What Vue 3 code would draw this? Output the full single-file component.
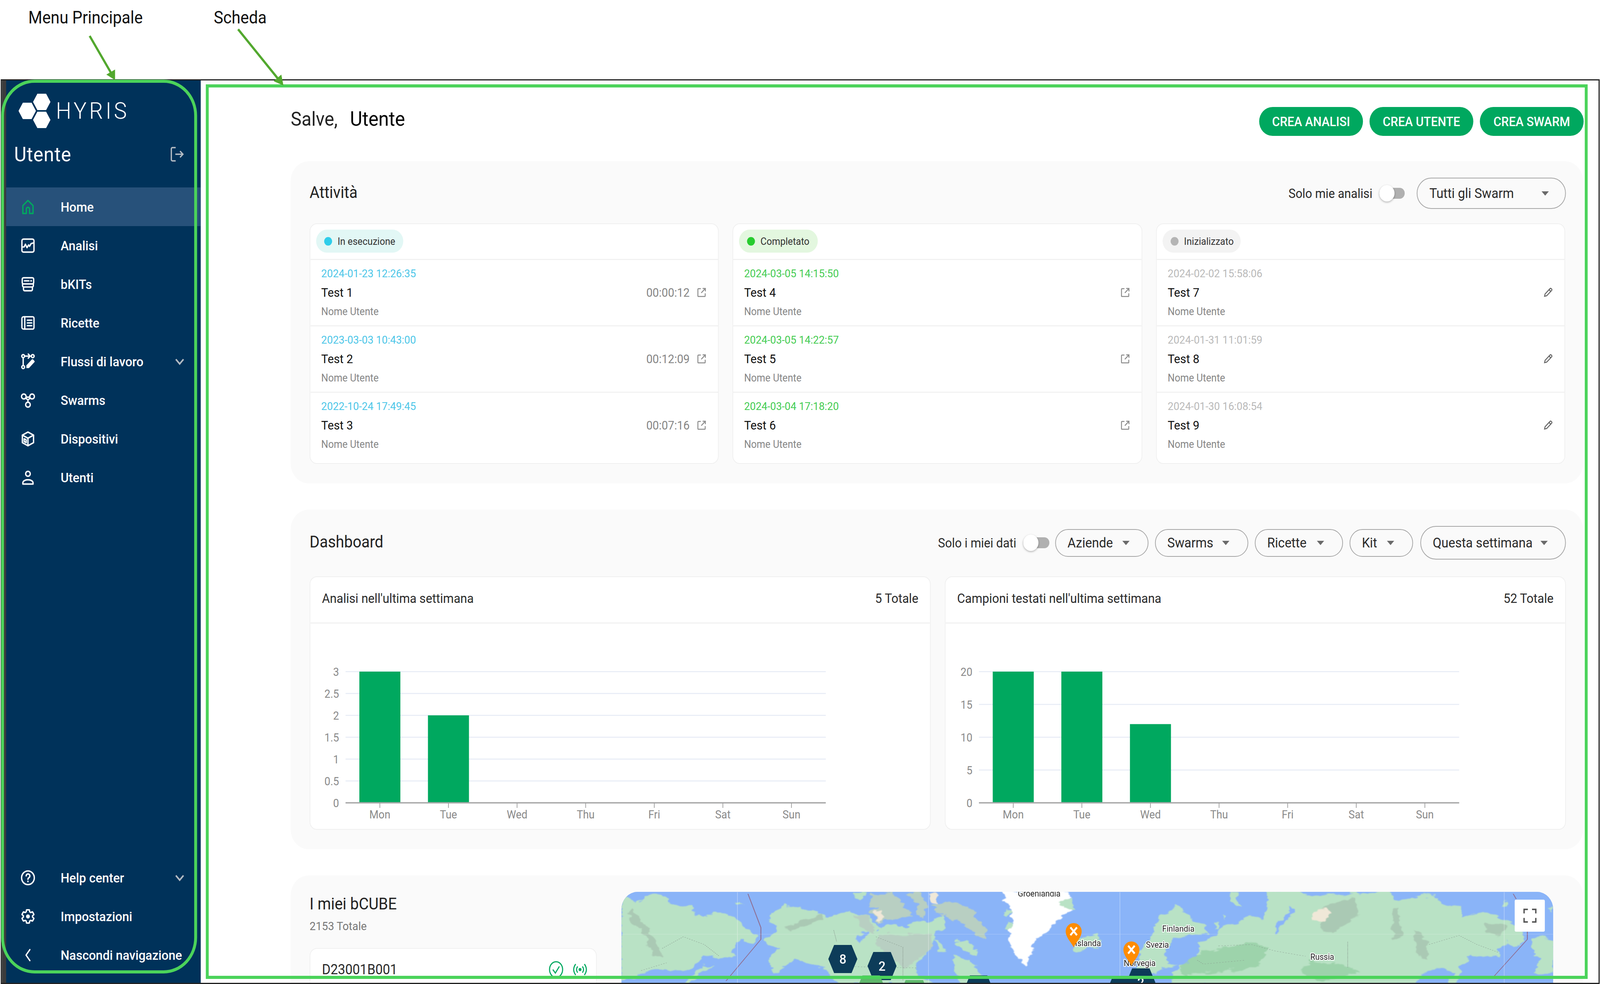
<template>
  <div class="stage">
    <div class="page" :style="{ transform: `scaleX(${fitX})` }">
      <div class="captions">
        <span class="caption cap-menu">Menu Principale</span>
        <span class="caption cap-tab">Scheda</span>
      </div>

      <div class="shell">
        <aside class="sidebar">
          <div class="logo">
            <svg class="logo-mark" viewBox="0 0 90 92">
              <path d="M52 2h24l12 21-12 21H52L40 23z" />
              <path d="M12 25h24l12 21-12 21H12L0 46z" />
              <path d="M52 48h24l12 21-12 21H52L40 69z" />
            </svg>
            <span class="logo-text">HYRIS</span>
          </div>
          <div class="user-row">
            <span class="user-name">Utente</span>
            <svg class="logout" viewBox="0 0 38 40">
              <path d="M15 3H6a3 3 0 0 0-3 3v28a3 3 0 0 0 3 3h9" />
              <path d="M14 20h21M27 12l8 8-8 8" />
            </svg>
          </div>

          <nav class="nav">
            <div v-for="item in navItems" :key="item.label" class="nav-item" :class="{ active: item.active }">
              <svg class="nav-icon" viewBox="0 0 24 24">
                <path v-for="d in item.icon" :key="d" :d="d" />
                <path v-for="d in item.solid || []" :key="d" :d="d" class="solid" />
              </svg>
              <span class="nav-label">{{ item.label }}</span>
              <svg v-if="item.more" class="chev" viewBox="0 0 24 24"><path d="M3 7l9 10 9-10" /></svg>
            </div>
          </nav>

          <div class="nav nav-bottom">
            <div v-for="item in bottomItems" :key="item.label" class="nav-item">
              <svg class="nav-icon" viewBox="0 0 24 24">
                <path v-for="d in item.icon" :key="d" :d="d" />
                <path v-for="d in item.solid || []" :key="d" :d="d" class="solid" />
              </svg>
              <span class="nav-label">{{ item.label }}</span>
              <svg v-if="item.more" class="chev" viewBox="0 0 24 24"><path d="M3 7l9 10 9-10" /></svg>
            </div>
          </div>
        </aside>

        <main class="main">
          <header class="top">
            <div class="hello"><span class="hello-a">Salve,</span><span class="hello-b">Utente</span></div>
            <div class="actions">
              <button class="cta">CREA ANALISI</button>
              <button class="cta">CREA UTENTE</button>
              <button class="cta">CREA SWARM</button>
            </div>
          </header>

          <section class="panel panel-activity">
            <div class="panel-head">
              <h2 class="panel-title">Attività</h2>
              <div class="filters">
                <span class="toggle-label">Solo mie analisi</span>
                <span class="toggle"><i></i></span>
                <span class="select select-wide">Tutti gli Swarm<b class="caret"></b></span>
              </div>
            </div>
            <div class="columns">
              <div v-for="col in columns" :key="col.status" class="col">
                <div class="col-head">
                  <span class="pill" :class="col.kind"><i class="dot"></i>{{ col.status }}</span>
                </div>
                <div v-for="row in col.rows" :key="row.name" class="row" :class="col.kind">
                  <div class="row-text">
                    <div class="row-date">{{ row.date }}</div>
                    <div class="row-name">{{ row.name }}</div>
                    <div class="row-user">Nome Utente</div>
                  </div>
                  <div class="row-side">
                    <span v-if="row.time" class="row-time">{{ row.time }}</span>
                    <svg v-if="col.kind !== 'idle'" class="mini" viewBox="0 0 24 24">
                      <path d="M10 3H4a1.5 1.5 0 0 0-1.5 1.5v15.5A1.5 1.5 0 0 0 4 21.500h15.500A1.500 1.500 0 0 0 21 20v-6" />
                      <path d="M14.500 2.500h7v7M21 3l-10 10" />
                    </svg>
                    <svg v-else class="mini pen" viewBox="0 0 24 24">
                      <path d="M3 21l1.300-5.500L16.800 3a2.300 2.300 0 0 1 3.200 0l1 1a2.300 2.300 0 0 1 0 3.200L8.500 19.700z" />
                      <path d="M14.500 5.500l4 4" />
                    </svg>
                  </div>
                </div>
              </div>
            </div>
          </section>

          <section class="panel panel-dash">
            <div class="panel-head dash-head">
              <h2 class="panel-title">Dashboard</h2>
              <div class="filters filters-dash">
                <span class="toggle-label">Solo i miei dati</span>
                <span class="toggle"><i></i></span>
                <span v-for="chip in chips" :key="chip.label" class="select chip" :class="chip.size">{{ chip.label }}<b class="caret"></b></span>
                <span class="select chip chip-tall">Questa settimana<b class="caret"></b></span>
              </div>
            </div>
            <div class="charts">
              <div v-for="chart in charts" :key="chart.title" class="chart-card">
                <div class="chart-head">
                  <span>{{ chart.title }}</span>
                  <span>{{ chart.total }}</span>
                </div>
                <svg class="chart" :viewBox="`0 0 ${chartWidth} 530`">
                  <line v-for="t in chart.ticks" :key="t" class="grid" :x1="chart.x0" :x2="chart.x0 + 1323" :y1="yOf(chart, t)" :y2="yOf(chart, t)" />
                  <text v-for="t in chart.ticks" :key="'l' + t" class="tick-label" :x="chart.x0 - 18" :y="yOf(chart, t) + 11" text-anchor="end">{{ t }}</text>
                  <rect v-for="(v, i) in chart.values" :key="i" class="bar" :x="chart.x0 + 38 + i * 189" :y="yOf(chart, v)" width="113" :height="base - yOf(chart, v)" />
                  <line class="axis" :x1="chart.x0" :x2="chart.x0 + 1323" :y1="base" :y2="base" />
                  <g v-for="(d, i) in days" :key="d">
                    <line class="axis-tick" :x1="chart.x0 + 94.500 + i * 189" :x2="chart.x0 + 94.500 + i * 189" :y1="base" :y2="base + 13" />
                    <text class="tick-label" :x="chart.x0 + 94.500 + i * 189" :y="base + 40" text-anchor="middle">{{ d }}</text>
                  </g>
                </svg>
              </div>
            </div>
          </section>

          <section class="panel panel-map">
            <div class="device-side">
              <h2 class="panel-title">I miei bCUBE</h2>
              <div class="device-total">2153 Totale</div>
              <div class="device-card">
                <span class="device-id">D23001B001</span>
                <svg class="dev-icon" viewBox="0 0 40 44">
                  <ellipse cx="20" cy="22" rx="18" ry="20" />
                  <path d="M11 22l7 9 11-17" />
                </svg>
                <svg class="dev-icon signal" viewBox="0 0 40 44">
                  <path d="M8 8c-7 9-7 19 0 28M32 8c7 9 7 19 0 28M13.500 14c-4 5-4 11 0 16M26.500 14c4 5 4 11 0 16" />
                  <circle cx="20" cy="22" r="4" />
                </svg>
              </div>
            </div>

            <div class="map">
              <svg class="map-svg" viewBox="0 0 2567 240">
                <defs>
                  <filter id="coast" x="-2%" y="-10%" width="104%" height="120%">
                    <feTurbulence type="fractalNoise" baseFrequency=".025 .07" numOctaves="3" seed="4" />
                    <feDisplacementMap in="SourceGraphic" scale="24" xChannelSelector="R" yChannelSelector="G" />
                    <feGaussianBlur stdDeviation="1.200" />
                  </filter>
                </defs>
                <rect width="2567" height="240" fill="#8ab4f8" />
                <g filter="url(#coast)">
                  <g transform="translate(-12,-5) scale(.829,.3333)">
                    <path class="land" d="M14 60L30 50 60 100 110 40 125 25 150 40 180 60 175 100 205 130 245 115 258 150 255 210 270 195 310 190 335 175 380 195 410 250 440 310 470 350 460 400 445 430 420 390 395 410 385 470 390 510 350 520 290 500 280 540 250 590 215 630 160 610 100 620 50 680 14 700Z" />
                    <path class="land" d="M285 585L325 575 270 660 240 730 220 730Z" />
                    <path class="land" d="M390 105L410 90 418 115 395 130Z" />
                    <path class="land" d="M500 240L520 190 560 110 590 130 650 170 710 210 740 180 770 155 800 190 825 195 860 240 870 300 900 280 930 270 970 270 1000 230 1030 250 1060 200 1090 200 1095 280 1060 340 1060 400 1030 480 1010 540 990 590 990 640 1040 700 1050 730 740 730 700 620 640 565 590 530 540 620 520 630 500 570 510 500 540 450 500 420 490 380 520 340 530 290Z" />
                    <path class="tundra" d="M870 340L1050 340 1050 430 1010 520 960 600 900 500 860 420Z" />
                    <path class="tundra" d="M790 200L830 200 860 300 850 340 810 290Z" />
                    <path class="water" d="M795 345L840 325 810 410 800 380Z" />
                    <path class="land" d="M790 20L830 20 810 90 790 60Z" />
                    <path class="tundra" d="M840 20L920 20 950 110 980 200 930 225 870 240 840 160 870 120 840 120Z" />
                    <path class="tundra" d="M960 20L1000 20 1030 100 1020 230 990 200 1000 110Z" />
                    <path class="tundra" d="M1040 120L1120 90 1160 110 1190 200 1230 320 1220 390 1190 350 1170 300 1140 250 1070 180Z" />
                    <path class="land" d="M1120 400L1160 380 1200 480 1200 520 1170 480 1130 430Z" />
                    <path class="land" d="M1060 390L1100 460 1070 470Z" />
                    <path class="land" d="M1120 510L1170 550 1190 600 1210 650 1240 730 1150 730 1120 620Z" />
                    <path class="land" d="M1295 140L1310 160 1300 205 1285 175Z" />
                    <path class="land" d="M1295 250L1320 270 1310 330 1295 300Z" />
                    <path class="ice" d="M1285 10L1500 10 1510 60 1480 100 1510 160 1470 220 1440 300 1400 370 1370 510 1360 595 1330 530 1310 430 1300 340 1320 250 1300 100 1285 70Z" />
                    <path class="land" d="M1470 90L1510 70 1520 150 1490 150Z" />
                    <path class="land" d="M1505 400L1540 370 1600 345 1610 430 1530 465Z" />
                    <path class="sand" d="M1040 17L1060 17 1065 110 1045 100Z" />
                    <path class="sand" d="M850 160L880 170 880 240 860 210Z" />
                    <path class="smudge" d="M560 290L680 190 690 220 580 310Z" />
                    <path class="smudge" d="M30 200L50 150 130 380 150 520 120 500 90 350Z" />
                  </g>
                  <g transform="translate(1288,-5) scale(.829,.3333)">
                    <path class="land" d="M590 10L680 10 760 50 1000 10 1030 90 1090 60 1100 30 1160 60 1190 130 1230 120 1240 180 1240 210 1270 190 1310 175 1360 200 1420 270 1450 350 1440 410 1420 440 1395 400 1370 420 1360 470 1370 510 1310 510 1270 500 1250 550 1210 630 1140 610 1090 680 1080 730 270 730 280 650 300 600 340 560 380 520 360 480 370 400 420 350 440 290 500 240 540 190 580 230 590 100Z" />
                    <path class="land" d="M210 340L240 190 290 130 320 170 340 220 380 260 395 340 360 360 320 350 280 370 255 470 260 560 300 590 240 590 225 660 170 640 160 570 180 440Z" />
                    <path class="land" d="M470 20L500 17 490 60 510 130 490 140 470 80Z" />
                    <path class="land" d="M420 260L435 250 430 310 420 300Z" />
                    <path class="land" d="M445 200L458 205 452 235Z" />
                    <path class="land" d="M1470 380L1510 350 1545 400 1545 640 1480 630 1500 530 1470 470Z" />
                    <path class="land" d="M1520 140L1545 125 1545 170Z" />
                    <path class="land" d="M1375 95L1395 95 1390 125 1370 125Z" />
                    <path class="land" d="M1262 505L1230 620 1220 730 1185 730 1210 640 1225 520Z" />
                    <path class="deep" d="M370 480L540 400 600 440 560 600 440 620 320 660 300 610Z" />
                    <path class="deep" d="M740 540L840 580 900 640 760 700 700 620Z" />
                    <path class="smudge" d="M1010 150L1030 150 1040 360 1010 380Z" />
                    <path class="smudge" d="M780 130L880 60 900 180 810 330 770 290Z" />
                    <path class="smudge" d="M1080 300L1130 390 1120 540 1090 500Z" />
                    <path class="smudge" d="M1310 250L1390 270 1370 350 1320 330Z" />
                    <path class="sand" d="M745 160L790 150 800 200 770 260 745 240Z" />
                    <path class="water" d="M625 230L655 225 640 300 620 330Z" />
                    <path class="water" d="M645 230L660 230 690 150 670 130Z" />
                  </g>
                </g>
                <g transform="translate(-12,-5) scale(.829,.3333)">
                  <path class="borderline" d="M150 450L220 360 290 420 340 510M80 620L165 560" />
                  <path class="borderline" d="M720 310L730 400M860 360L950 440 950 700M790 590L1000 600" />
                  <path class="dateline" d="M435 30L478 290 478 380 362 700" />
                  <path class="graticule" d="M400 17V720M1035 17V720M14 340H1568" />
                </g>
                <g transform="translate(1288,-5) scale(.829,.3333)">
                  <path class="borderline" d="M430 430L540 420 620 470 720 510M360 540L380 570 520 540M860 400V600M1130 420L1230 350 1290 420 1360 480" />
                  <path class="dateline" d="M1410 30L1420 70M1457 320V380L1340 680" />
                  <path class="graticule" d="M103 17V720M1380 17V720M0 340H1545" />
                </g>

                <text v-for="p in mapLabels" :key="p.t" class="map-label" :x="p.x" :y="p.y">{{ p.t }}</text>

                <g v-for="(m, i) in hexes" :key="i" :transform="`translate(${m.x},${m.y})`">
                  <path :class="m.green ? 'hex-green' : 'hex'" d="M-24-36H24L40 0 24 36H-24L-40 0Z" />
                  <text class="hex-text" y="12" text-anchor="middle">{{ m.n }}</text>
                </g>

                <g v-for="(p, i) in pins" :key="'p' + i" :transform="`translate(${p.x},${p.y})`">
                  <path class="pin" d="M0 62C-8 48-22 36-22 21A22 21 0 0 1 22 21C22 36 8 48 0 62Z" />
                  <path class="pin-x" d="M-9 11L9 31M9 11L-9 31" />
                </g>
              </svg>
              <div class="fullscreen">
                <svg viewBox="0 0 40 40"><path d="M3 14V3h11M26 3h11v11M37 26v11H26M14 37H3V26" /></svg>
              </div>
            </div>
          </section>
        </main>
      </div>

      <!-- annotazioni verdi sopra lo screenshot -->
      <div class="mark mark-nav"></div>
      <div class="mark mark-tab"></div>
      <svg class="arrows" viewBox="0 0 4408 2520">
        <line x1="247" y1="92" x2="308" y2="190" />
        <path d="M317 205L293 191 317 178Z" />
        <line x1="656" y1="75" x2="768" y2="204" />
        <path d="M781 219L754 208 775 191Z" />
      </svg>
    </div>
  </div>
</template>

<script setup>
// the window can come out narrower than the 4408 design, squeeze so nothing is cut
const fitX = Math.min(1, window.innerWidth / 4408)

const circle = (x, y, r) => `M${x - r} ${y}a${r} ${r} 0 1 0 ${r * 2} 0a${r} ${r} 0 1 0 ${-r * 2} 0`

const navItems = [
  { label: 'Home', active: true, icon: ['M12 2.500L4 10v11.500h5.500V15a2.500 2.500 0 0 1 5 0v6.500H20V10z'] },
  { label: 'Analisi', icon: ['M5 2.500h14A2.500 2.500 0 0 1 21.500 5v14a2.500 2.500 0 0 1-2.500 2.500H5A2.500 2.500 0 0 1 2.500 19V5A2.500 2.500 0 0 1 5 2.500z', 'M3 14h3l2-4 2.500 5 2.500-4 1.500 2 2.500-4 4-1'] },
  { label: 'bKITs', icon: ['M5 2.500h14a2 2 0 0 1 2 2v5a2 2 0 0 1-2 2H5a2 2 0 0 1-2-2v-5a2 2 0 0 1 2-2z', 'M6.500 7h7M16.500 7h1', 'M3.500 11.500V14a2 2 0 0 0 2 2h13a2 2 0 0 0 2-2v-2.500', 'M5 16v3.500a2 2 0 0 0 2 2h10a2 2 0 0 0 2-2V16'] },
  { label: 'Ricette', icon: ['M5 3h14.500A2 2 0 0 1 21.500 5v14a2 2 0 0 1-2 2H5a2.500 2.500 0 0 1-2.500-2.500v-13A2.500 2.500 0 0 1 5 3z', 'M7 3v18', 'M11 8h7M11 12h7M11 16h7'] },
  { label: 'Flussi di lavoro', more: true, icon: [circle(4.5, 4, 2.2), circle(19.5, 4, 2.2), circle(4.5, 20, 2.2), 'M4.500 6.200v11.600', 'M7 4h8M12.500 1l3 3-3 3'], solid: ['M9.500 21.500v-4l8.500-8.500a1.500 1.500 0 0 1 2.200 0l1.800 1.800a1.500 1.500 0 0 1 0 2.200l-8.500 8.500z'] },
  { label: 'Swarms', icon: [circle(5.5, 6.5, 3.6), circle(18.5, 6.5, 3.6), circle(12, 18.5, 3.6), 'M9 7.500h6M8.500 9l3.500 2.500L15.500 9M12 11.500v3.400'] },
  { label: 'Dispositivi', icon: ['M12 2l8.800 4.500v11L12 22l-8.800-4.500v-11z', 'M3.200 6.500L12 11l8.800-4.500M12 11v11', 'M6 11.800l3.200 1.600v4l-3.200-1.600z'] },
  { label: 'Utenti', icon: [circle(12, 6.5, 3.6), 'M4 21.500v-1.500c0-3 3.500-4.800 8-4.800s8 1.800 8 4.800v1.500z'] }
]

const bottomItems = [
  { label: 'Help center', more: true, icon: [circle(12, 12, 10), 'M9.200 9.300a2.900 2.900 0 1 1 4.400 2.500c-1 .6-1.600 1.200-1.600 2.400', 'M12 17v.6'] },
  { label: 'Impostazioni', icon: ['M19.140 12.940c.04-.3.060-.61.060-.94 0-.32-.02-.64-.07-.94l2.030-1.580c.18-.14.23-.41.120-.61l-1.920-3.320c-.12-.22-.37-.29-.59-.22l-2.390.96c-.5-.38-1.030-.7-1.620-.94l-.36-2.540c-.04-.24-.24-.41-.48-.41h-3.840c-.24 0-.43.17-.47.41l-.36 2.540c-.59.24-1.130.57-1.620.94l-2.390-.96c-.22-.08-.47 0-.59.22L2.740 8.870c-.12.21-.08.47.12.61l2.030 1.580c-.05.3-.09.63-.09.94s.02.64.07.94l-2.030 1.580c-.18.14-.23.41-.12.61l1.920 3.320c.12.22.37.29.59.22l2.390-.96c.5.38 1.030.7 1.620.94l.36 2.540c.05.24.24.41.48.41h3.840c.24 0 .44-.17.47-.41l.36-2.540c.59-.24 1.130-.56 1.620-.94l2.390.96c.22.08.47 0 .59-.22l1.920-3.320c.12-.22.07-.47-.12-.61l-2.010-1.580z'], solid: [circle(12, 12, 3)] },
  { label: 'Nascondi navigazione', icon: ['M15 4l-6 8 6 8'] }
]

const columns = [
  {
    status: 'In esecuzione',
    kind: 'running',
    rows: [
      { date: '2024-01-23 12:26:35', name: 'Test 1', time: '00:00:12' },
      { date: '2023-03-03 10:43:00', name: 'Test 2', time: '00:12:09' },
      { date: '2022-10-24 17:49:45', name: 'Test 3', time: '00:07:16' }
    ]
  },
  {
    status: 'Completato',
    kind: 'done',
    rows: [
      { date: '2024-03-05 14:15:50', name: 'Test 4' },
      { date: '2024-03-05 14:22:57', name: 'Test 5' },
      { date: '2024-03-04 17:18:20', name: 'Test 6' }
    ]
  },
  {
    status: 'Inizializzato',
    kind: 'idle',
    rows: [
      { date: '2024-02-02 15:58:06', name: 'Test 7' },
      { date: '2024-01-31 11:01:59', name: 'Test 8' },
      { date: '2024-01-30 16:08:54', name: 'Test 9' }
    ]
  }
]

const chips = [
  { label: 'Aziende', size: 'chip-m' },
  { label: 'Swarms', size: 'chip-m' },
  { label: 'Ricette', size: 'chip-s' },
  { label: 'Kit', size: 'chip-xs' }
]
const days = ['Mon', 'Tue', 'Wed', 'Thu', 'Fri', 'Sat', 'Sun']

const chartWidth = 1710
const base = 459
const charts = [
  { title: "Analisi nell'ultima settimana", total: '5 Totale', x0: 97, unit: 112, ticks: [0, 0.5, 1, 1.5, 2, 2.5, 3], values: [3, 2] },
  { title: "Campioni testati nell'ultima settimana", total: '52 Totale', x0: 92, unit: 16.8, ticks: [0, 5, 10, 15, 20], values: [20, 20, 12] }
]
const yOf = (chart, v) => base - v * chart.unit

const mapLabels = [
  { t: 'Groenlandia', x: 1092, y: 12 },
  { t: 'Islanda', x: 1250, y: 139 },
  { t: 'Svezia', x: 1445, y: 143 },
  { t: 'Finlandia', x: 1490, y: 102 },
  { t: 'Russia', x: 1898, y: 174 },
  { t: 'Norvegia', x: 1384, y: 190 }
]

const hexes = [
  { x: 610, y: 172, n: '8' },
  { x: 718, y: 190, n: '2' },
  { x: 688, y: 250, n: '53', green: true },
  { x: 807, y: 262, n: '5', green: true },
  { x: 984, y: 250, n: '8' },
  { x: 1377, y: 254, n: '2' },
  { x: 1431, y: 232, n: '2' }
]

const pins = [
  { x: 1246, y: 80 },
  { x: 1405, y: 127 }
]
</script>

<style>
html,
body {
  margin: 0;
  background: #fff;
}
</style>

<style scoped>
.stage {
  width: 100vw;
  height: 100vh;
  overflow: hidden;
}

.page {
  position: relative;
  width: 4408px;
  height: 2520px;
  overflow: hidden;
  transform-origin: 0 0;
  background: #fff;
  font-family: Roboto, "Liberation Sans", sans-serif;
  color: #222;
}

.captions {
  height: 203px;
}

.caption {
  position: absolute;
  top: 19px;
  font-size: 44px;
  color: #111;
}

.cap-menu {
  left: 78px;
}

.cap-tab {
  left: 589px;
}

.shell {
  display: flex;
  box-sizing: border-box;
  width: 4405px;
  height: 2317px;
  margin-left: 2px;
  border: 3px solid #222;
  background: #fff;
  overflow: hidden;
}

.sidebar {
  display: flex;
  flex-direction: column;
  flex: none;
  box-sizing: border-box;
  width: 548px;
  border-left: 12px solid #3c3c3c;
  background: #00325a;
  color: #fff;
}

.logo {
  display: flex;
  align-items: center;
  gap: 13px;
  padding: 32px 0 0 34px;
  height: 92px;
}

.logo-mark {
  width: 90px;
  height: 92px;
  fill: #fff;
}

.logo-text {
  font-size: 60px;
  font-weight: 300;
  letter-spacing: 7px;
  line-height: 60px;
}

.user-row {
  display: flex;
  align-items: center;
  justify-content: space-between;
  padding: 30px 46px 0 22px;
  height: 70px;
}

.user-name {
  font-size: 52px;
  letter-spacing: 1px;
}

.logout {
  width: 38px;
  height: 40px;
  fill: none;
  stroke: #b4bcc4;
  stroke-width: 3.500;
}

.nav {
  margin-top: 50px;
}

.nav-bottom {
  margin-top: auto;
  padding-bottom: 22px;
}

.nav-item {
  display: flex;
  align-items: center;
  height: 99px;
  padding-left: 39px;
  font-size: 34px;
  font-weight: 500;
}

.nav-item.active {
  background: #27517a;
}

.nav-item.active .nav-icon {
  stroke: #00a85f;
}

.nav-icon {
  flex: none;
  width: 42px;
  height: 42px;
  fill: none;
  stroke: #fff;
  stroke-width: 2.100;
  stroke-linejoin: round;
  stroke-linecap: round;
}

.solid {
  fill: #fff;
  stroke: none;
}

.nav-label {
  margin-left: 69px;
  white-space: nowrap;
}

.chev {
  width: 28px;
  height: 28px;
  margin-left: auto;
  margin-right: 44px;
  fill: none;
  stroke: #b4bcc4;
  stroke-width: 3.500;
}

.main {
  flex: 1;
  min-width: 0;
  padding: 68px 43px 0 248px;
  overflow: hidden;
}

.top {
  display: flex;
  align-items: flex-start;
  justify-content: space-between;
  height: 139px;
  margin-right: -2px;
}

.hello {
  display: flex;
  align-items: baseline;
  gap: 34px;
  font-size: 50px;
  line-height: 62px;
}

.hello-b {
  font-size: 52px;
  color: #000;
}

.actions {
  display: flex;
  gap: 18px;
}

.cta {
  height: 74px;
  width: 286px;
  border: 0;
  border-radius: 37px;
  background: #00a85f;
  color: #fff;
  font-family: inherit;
  font-size: 33px;
  font-weight: 500;
}

.panel {
  box-sizing: border-box;
  background: #fafafa;
  border-radius: 50px;
  padding: 42px 47px 50px 52px;
  margin-bottom: 67px;
}

.panel-head {
  display: flex;
  align-items: center;
  justify-content: space-between;
  height: 80px;
  margin-bottom: 37px;
}

.panel-title {
  margin: 0 0 6px;
  font-size: 42px;
  font-weight: 400;
  color: #222;
}

.filters {
  display: flex;
  align-items: center;
}

.toggle-label {
  font-size: 33px;
  color: #2a2a2a;
}

.toggle {
  position: relative;
  width: 70px;
  height: 28px;
  margin: 0 33px 0 19px;
  border-radius: 14px;
  background: #b0b0b0;
}

.toggle i {
  position: absolute;
  left: 0;
  top: -7px;
  width: 42px;
  height: 42px;
  border-radius: 50%;
  background: #fff;
  box-shadow: 0 2px 5px rgba(0, 0, 0, .3);
}

.select {
  display: flex;
  align-items: center;
  justify-content: space-between;
  box-sizing: border-box;
  border: 2px solid #a6a6a6;
  border-radius: 40px;
  font-size: 35px;
  color: #2a2a2a;
  white-space: nowrap;
}

.select-wide {
  width: 411px;
  height: 80px;
  padding: 0 45px 0 33px;
}

.caret {
  width: 0;
  height: 0;
  border: 10px solid transparent;
  border-top: 11px solid #6a6a6a;
  border-bottom: 0;
}

.columns {
  display: grid;
  grid-template-columns: 1127px 1129px 1127px;
  gap: 38px;
}

.col {
  box-sizing: border-box;
  height: 616px;
  border: 2px solid #f0f0f0;
  border-radius: 20px;
  background: #fff;
  overflow: hidden;
}

.col-head {
  height: 89px;
  padding: 14px 0 0 16px;
  box-sizing: border-box;
}

.pill {
  display: inline-flex;
  align-items: center;
  gap: 15px;
  box-sizing: border-box;
  height: 59px;
  padding: 0 22px;
  border-radius: 30px;
  font-size: 26px;
  color: #333;
  white-space: nowrap;
}

.pill .dot {
  flex: none;
  width: 22px;
  height: 22px;
  border-radius: 50%;
}

.pill.running {
  width: 240px;
  background: #e2f7f5;
}

.pill.running .dot {
  background: #2fcdea;
}

.pill.done {
  width: 217px;
  background: #e3f7df;
}

.pill.done .dot {
  background: #27cc2f;
}

.pill.idle {
  width: 215px;
  background: #f3f3f3;
}

.pill.idle .dot {
  background: #b4b4b4;
}

.row {
  display: flex;
  align-items: flex-start;
  justify-content: space-between;
  box-sizing: border-box;
  height: 170px;
  padding: 18px 32px 0 30px;
  border-top: 3px solid #f2f2f2;
}

.row:last-child {
  height: 185px;
}

.row-date {
  height: 34px;
  line-height: 34px;
  font-size: 28.500px;
}

.running .row-date {
  color: #4cc6e8;
}

.done .row-date {
  color: #44cc52;
}

.idle .row-date {
  color: #b9b9b9;
}

.row-name {
  height: 40px;
  margin-top: 11px;
  line-height: 40px;
  font-size: 32px;
  color: #111;
}

.row-user {
  height: 34px;
  margin-top: 12px;
  line-height: 34px;
  font-size: 27px;
  color: #868686;
}

.row-side {
  display: flex;
  align-items: center;
  gap: 20px;
  height: 40px;
  margin-top: 45px;
}

.row-time {
  font-size: 31px;
  color: #868686;
}

.mini {
  width: 26px;
  height: 26px;
  fill: none;
  stroke: #8c8c8c;
  stroke-width: 2.400;
}

.pen {
  stroke: #666;
}

.dash-head {
  height: 86px;
  margin-bottom: 43px;
}

.filters-dash .toggle {
  width: 72px;
  margin: 0 16px 0 19px;
}

.chip {
  height: 71px;
  margin-right: 18px;
  padding: 0 50px 0 32px;
}

.chip-m {
  width: 257px;
}

.chip-s {
  width: 243px;
}

.chip-xs {
  width: 175px;
  margin-right: 20px;
}

.chip-tall {
  width: 401px;
  height: 86px;
  margin-right: 0;
  border-radius: 43px;
  padding: 0 48px 0 32px;
}

.charts {
  display: grid;
  grid-template-columns: 1fr 1fr;
  gap: 39px;
}

.chart-card {
  box-sizing: border-box;
  height: 649px;
  border: 2px solid #f0f0f0;
  border-radius: 20px;
  background: #fff;
  overflow: hidden;
}

.chart-head {
  display: flex;
  align-items: center;
  justify-content: space-between;
  box-sizing: border-box;
  height: 119px;
  padding: 0 32px 8px 32px;
  border-bottom: 3px solid #f2f2f2;
  font-size: 33.500px;
  color: #2a2a2a;
}

.chart {
  display: block;
  width: 1710px;
  height: 530px;
}

.grid {
  stroke: #e6ebf5;
  stroke-width: 2.500;
}

.axis {
  stroke: #a8a8a8;
  stroke-width: 3.500;
}

.axis-tick {
  stroke: #a0a0a0;
  stroke-width: 2;
}

.tick-label {
  font-size: 29px;
  fill: #8a8a8a;
}

.bar {
  fill: #00a85f;
}

.panel-map {
  display: flex;
  gap: 68px;
  height: 400px;
  padding-right: 81px;
  margin-bottom: 0;
}

.device-side {
  flex: none;
  width: 791px;
}

.device-side .panel-title {
  margin-top: 6px;
  margin-bottom: 0;
  line-height: 50px;
}

.device-total {
  margin-top: 14px;
  font-size: 30px;
  color: #787878;
}

.device-card {
  display: flex;
  align-items: center;
  gap: 26px;
  box-sizing: border-box;
  height: 110px;
  margin-top: 39px;
  padding: 0 24px 0 32px;
  border: 2px solid #f0f0f0;
  border-radius: 20px;
  background: #fff;
}

.device-id {
  flex: 1;
  font-size: 36px;
  color: #2a2a2a;
}

.dev-icon {
  width: 40px;
  height: 44px;
  fill: none;
  stroke: #00a85f;
  stroke-width: 3;
}

.signal circle {
  fill: #00a85f;
  stroke: none;
}

.map {
  position: relative;
  flex: none;
  width: 2567px;
  height: 240px;
  border-radius: 45px 45px 0 0;
  overflow: hidden;
  background: #8ab4f8;
}

.map-svg {
  display: block;
  width: 2567px;
  height: 240px;
}

.land {
  fill: #b9e2c5;
}

.deep {
  fill: #9dd3ab;
}

.tundra {
  fill: #b8cfc2;
}

.water {
  fill: #8ab4f8;
}

.ice {
  fill: #fff;
}

.sand {
  fill: #f0e8d8;
}

.smudge {
  fill: #aac9b4;
}

.borderline {
  fill: none;
  stroke: #87978d;
  stroke-width: 2;
  stroke-dasharray: 5 5;
}

.dateline {
  fill: none;
  stroke: #8f6f93;
  stroke-width: 3;
}

.graticule {
  fill: none;
  stroke: rgba(255, 255, 255, .35);
  stroke-width: 2;
}

.map-label {
  font-size: 22px;
  fill: #222;
  paint-order: stroke;
  stroke: #fff;
  stroke-width: 4px;
}

.hex {
  fill: #0d3c59;
}

.hex-green {
  fill: #5fb86c;
}

.hex-text {
  font-size: 34px;
  font-weight: 500;
  fill: #fff;
}

.pin {
  fill: #ff8c00;
}

.pin-x {
  fill: none;
  stroke: #fff;
  stroke-width: 5;
}

.fullscreen {
  position: absolute;
  right: 23px;
  top: 20px;
  display: flex;
  align-items: center;
  justify-content: center;
  width: 83px;
  height: 82px;
  border-radius: 4px;
  background: #fff;
}

.fullscreen svg {
  width: 38px;
  height: 38px;
  fill: none;
  stroke: #555;
  stroke-width: 4;
}

.mark {
  position: absolute;
  box-sizing: border-box;
  border: 8px solid #4bd35a;
  pointer-events: none;
}

.mark-nav {
  left: 3px;
  top: 204px;
  width: 540px;
  height: 2289px;
  border-radius: 92px;
}

.mark-tab {
  left: 567px;
  top: 216px;
  width: 3807px;
  height: 2291px;
}

.arrows {
  position: absolute;
  left: 0;
  top: 0;
  width: 4408px;
  height: 2520px;
  pointer-events: none;
  fill: #52a82e;
  stroke: none;
}

.arrows line {
  stroke: #52a82e;
  stroke-width: 6;
}
</style>
